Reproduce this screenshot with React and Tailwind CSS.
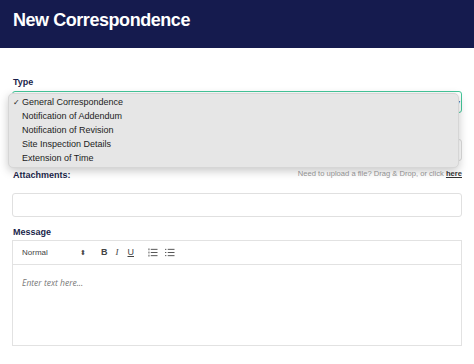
// New Correspondence form with the native Type menu shown open

const TYPES = [
  'General Correspondence',
  'Notification of Addendum',
  'Notification of Revision',
  'Site Inspection Details',
  'Extension of Time',
]

function Label({ children, className = '' }) {
  return (
    <div className={`text-[9px] leading-[12px] font-bold text-[#1b1f4b] ${className}`}>
      {children}
    </div>
  )
}

function ListIcon({ ordered }) {
  return (
    <svg width="10" height="9" viewBox="0 0 11 10" className="text-[#444]">
      {ordered ? (
        <g fill="currentColor">
          <rect x="0.5" y="0.5" width="1" height="2" />
          <rect x="0.5" y="4" width="1" height="2" />
          <rect x="0.5" y="7.5" width="1" height="2" />
        </g>
      ) : (
        <g fill="currentColor">
          <rect x="0" y="1" width="1.4" height="1" />
          <rect x="0" y="4.5" width="1.4" height="1" />
          <rect x="0" y="8" width="1.4" height="1" />
        </g>
      )}
      <g stroke="currentColor" strokeWidth="1">
        <line x1="3" y1="1.5" x2="10.5" y2="1.5" />
        <line x1="3" y1="5" x2="10.5" y2="5" />
        <line x1="3" y1="8.5" x2="10.5" y2="8.5" />
      </g>
    </svg>
  )
}

export default function App() {
  return (
    <div className="w-[474px] h-[364px] bg-white overflow-hidden" style={{ fontFamily: '"Liberation Sans", Arial, sans-serif' }}>
      <div className="h-12 bg-[#151b4e] flex items-center px-[13px] pb-[7px]">
        <h1 className="text-white text-[18px] font-bold tracking-[-0.45px]">New Correspondence</h1>
      </div>

      <div className="px-3">
        <Label className="mt-[28px] ml-px">Type</Label>

        <div className="relative mt-[3px]">
          <div className="h-[22px] border border-[#45c89b] rounded-[3px] bg-white flex items-center justify-end pr-[1px]">
            <span className="text-[6px] text-[#555] leading-none">▾</span>
          </div>

          {/* hidden Subject label sits under the open menu */}
          <div className="h-[12px] mt-[11px]" />
          <div className="mt-[3px] h-[22px] border border-[#dcdcdc] rounded-[3px] bg-white" />

          <div className="absolute left-[-4px] top-[2px] w-[451px] h-[75px] bg-[#e6e6e6] rounded-[5px] shadow-[0_3px_10px_rgba(0,0,0,0.22)] border border-[#d6d6d6] pt-[2px]">
            {TYPES.map((t, i) => (
              <div key={t} className="flex items-center h-[14px] text-[9px] text-[#222]">
                <span className="w-[13px] pl-[4px] text-[8px]">{i === 0 ? '✓' : ''}</span>
                <span>{t}</span>
              </div>
            ))}
          </div>
        </div>

        <div className="flex items-end justify-between mt-[7px]">
          <Label className="ml-px">Attachments:</Label>
          <div className="text-[7.6px] text-[#9a9a9a] mb-[2px]">
            Need to upload a file? Drag &amp; Drop, or click{' '}
            <span className="font-bold text-[#333] underline">here</span>
          </div>
        </div>
        <div className="mt-[12px] h-[24px] border border-[#e0e0e0] rounded-[3px]" />

        <Label className="mt-[9px] ml-px">Message</Label>
        <div className="mt-[2px] border border-[#e2e2e2]">
          <div className="h-[24px] border-b border-[#e2e2e2] flex items-center pl-[9px] text-[8px] text-[#444]">
            <span className="w-[58px]">Normal</span>
            <span className="text-[7px] leading-none mr-[15px]">⬍</span>
            <span className="font-bold text-[9px] mr-[8px]">B</span>
            <span className="italic text-[9px] mr-[9px]" style={{ fontFamily: '"Liberation Serif", serif' }}>I</span>
            <span className="underline text-[9px] mr-[14px]">U</span>
            <span className="mr-[7px]"><ListIcon ordered /></span>
            <ListIcon />
          </div>
          <div className="h-[80px] px-[9px] pt-[12px] text-[8.5px] italic text-[#777]" style={{ fontFamily: '"Open Sans", sans-serif' }}>
            Enter text here...
          </div>
        </div>
      </div>
    </div>
  )
}
